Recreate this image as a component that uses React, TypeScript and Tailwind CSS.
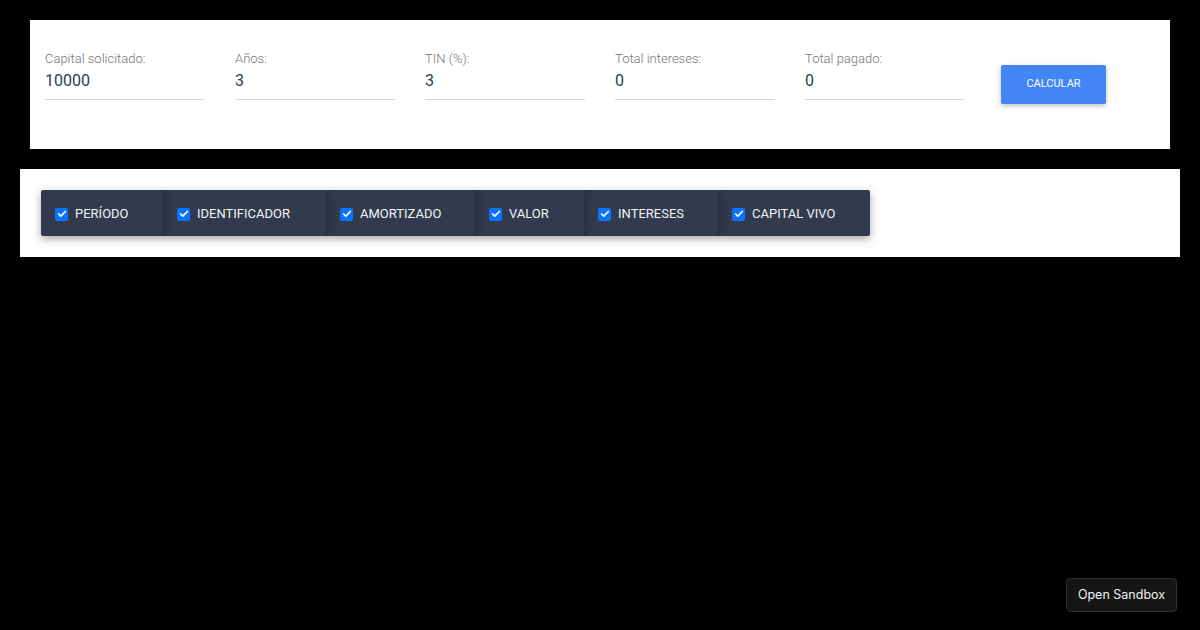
import { Check } from "lucide-react";

const fields = [
  { label: "Capital solicitado:", value: "10000" },
  { label: "Años:", value: "3" },
  { label: "TIN (%):", value: "3" },
  { label: "Total intereses:", value: "0" },
  { label: "Total pagado:", value: "0" },
];

const columns = [
  { label: "PERÍODO", width: "w-[122px]" },
  { label: "IDENTIFICADOR", width: "w-[163px]" },
  { label: "AMORTIZADO", width: "w-[149px]" },
  { label: "VALOR", width: "w-[109px]" },
  { label: "INTERESES", width: "w-[134px]" },
  { label: "CAPITAL VIVO", width: "w-[152px]" },
];

const App = () => {
  return (
    <div className="min-h-screen w-full bg-black font-['Roboto',sans-serif] pt-5 relative">
      <div className="mx-[30px] h-[129px] bg-white flex items-start pl-[15px] pt-[31px]">
        {fields.map((f) => (
          <div key={f.label} className="w-[160px] mr-[30px] flex flex-col">
            <label className="text-[13px] leading-[16px] font-light text-[#757575]">
              {f.label}
            </label>
            <div className="text-[16px] leading-[20px] text-[#2c3e50] mt-[4px] pb-[8px] border-b border-[#d4d4d4]">
              {f.value}
            </div>
          </div>
        ))}
        <button className="ml-[6px] mt-[14px] w-[105px] h-[39px] bg-[#4285f4] text-white text-[11px] rounded-[2px] shadow-[0_2px_5px_rgba(0,0,0,0.25)]">
          CALCULAR
        </button>
      </div>

      <div className="mx-5 mt-5 h-[88px] bg-white pl-[21px] pt-[21px]">
        <div className="inline-flex h-[46px] bg-[#323a4d] rounded-[2px] shadow-[0_3px_8px_rgba(0,0,0,0.35)] overflow-hidden">
          {columns.map((c) => (
            <div
              key={c.label}
              className={`${c.width} flex items-center pl-[14px] pt-[2px] gap-[7px] shadow-[4px_0_6px_rgba(0,0,0,0.18)]`}
            >
              <span className="w-[13px] h-[13px] rounded-[2px] bg-[#0a74ff] flex items-center justify-center">
                <Check size={10} strokeWidth={4} className="text-white" />
              </span>
              <span className="text-[13px] text-[#f1f3f7] font-normal">
                {c.label}
              </span>
            </div>
          ))}
        </div>
      </div>

      <button className="absolute left-[1066px] top-[578px] w-[111px] h-[34px] rounded-[4px] bg-[#151515] border border-[#2e2e2e] text-[12.5px] text-[#f2f2f2] font-['Inter',sans-serif]">
        Open Sandbox
      </button>
    </div>
  );
};

export default App;
